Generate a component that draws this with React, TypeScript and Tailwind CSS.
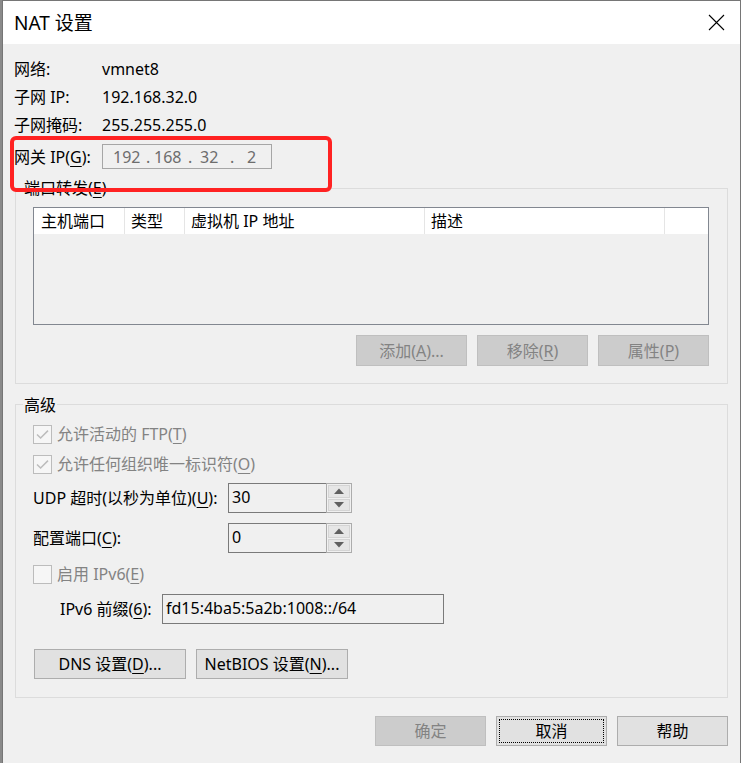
import React from "react";

const U = ({ c }: { c: string }) => (
  <span className="underline underline-offset-[3px] decoration-1">{c}</span>
);

function Btn({
  children,
  w = "w-[111px]",
  h = "h-[31px]",
  disabled = false,
  focused = false,
}: {
  children: React.ReactNode;
  w?: string;
  h?: string;
  disabled?: boolean;
  focused?: boolean;
}) {
  return (
    <div
      className={
        "relative flex items-center justify-center border leading-[20px] " +
        w +
        " " +
        h +
        " " +
        (disabled
          ? "bg-[#cccccc] border-[#bfbfbf] text-[#838383]"
          : "bg-[#e1e1e1] border-[#adadad] text-black")
      }
    >
      {children}
      {focused && (
        <span className="absolute inset-[2px] border border-dotted border-black" />
      )}
    </div>
  );
}

function Check({ checked }: { checked: boolean }) {
  return (
    <span className="w-[19px] h-[19px] border border-[#bcbcbc] bg-[#f6f6f6] flex items-center justify-center shrink-0">
      {checked && (
        <svg width="15" height="15" viewBox="0 0 15 15">
          <path
            d="M2 7.5 L5.6 11 L13 3.6"
            stroke="#bcbcbc"
            strokeWidth="1.5"
            fill="none"
          />
        </svg>
      )}
    </span>
  );
}

function Spin({ value }: { value: string }) {
  return (
    <div className="flex h-[30px]">
      <div className="w-[98px] h-full border-t border-l border-b border-[#7a7a7a] bg-[#f0f0f0] pl-[3px] pt-[3px] leading-[20px]">
        {value}
      </div>
      <div className="w-[26px] h-full border border-[#acacac] flex flex-col p-[1px] gap-[1px] bg-[#f0f0f0]">
        <div className="flex-1 border border-[#d4d4d4] bg-[#e6e6e6] flex items-center justify-center">
          <svg width="10" height="6" viewBox="0 0 10 6">
            <path d="M0 6 L5 0.5 L10 6 Z" fill="#606060" />
          </svg>
        </div>
        <div className="flex-1 border border-[#d4d4d4] bg-[#e6e6e6] flex items-center justify-center">
          <svg width="10" height="6" viewBox="0 0 10 6">
            <path d="M0 0 L10 0 L5 5.5 Z" fill="#606060" />
          </svg>
        </div>
      </div>
    </div>
  );
}

export default function App() {
  return (
    <div className="w-[741px] h-[763px] flex overflow-hidden bg-[#f0f0f0] text-[16px] text-black font-['Noto_Sans','Noto_Sans_CJK_SC',sans-serif]">
      <div className="w-[2px] h-full bg-[#8a8a8a] shrink-0" />
      <div className="relative w-[739px] h-[763px] border-t border-l border-r border-[#767676] bg-[#f0f0f0] shrink-0">
        {/* title bar */}
        <div className="h-[43px] bg-white flex items-center justify-between pl-[11px] pr-[15px]">
          <span className="text-[19px] leading-[24px]">NAT 设置</span>
          <svg width="17" height="17" viewBox="0 0 17 17">
            <path d="M1 1 L16 16 M16 1 L1 16" stroke="#000" strokeWidth="1.1" />
          </svg>
        </div>

        {/* info rows */}
        <div className="ml-[11px] pt-[11px] leading-[20px]">
          <div className="flex h-[28px] items-center">
            <span className="w-[88px]">网络:</span>
            <span>vmnet8</span>
          </div>
          <div className="flex h-[28px] items-center">
            <span className="w-[88px]">子网 IP:</span>
            <span>192.168.32.0</span>
          </div>
          <div className="flex h-[28px] items-center">
            <span className="w-[88px]">子网掩码:</span>
            <span>255.255.255.0</span>
          </div>
          <div className="flex mt-[5px] h-[25px] items-center">
            <span className="w-[88px]">
              网关 IP(<U c="G" />):
            </span>
            <div className="w-[170px] h-[25px] border border-[#a6a6a6] bg-[#f0f0f0] text-[#6d6d6d] flex items-center pl-[10px]">
              <span className="w-[33px]">192</span>
              <span className="w-[8px]">.</span>
              <span className="w-[34px]">168</span>
              <span className="w-[12px]">.</span>
              <span className="w-[30px]">32</span>
              <span className="w-[17px]">.</span>
              <span>2</span>
            </div>
          </div>
        </div>

        {/* port forwarding group */}
        <div className="relative mt-[19px] mx-[12px] border border-[#dcdcdc] pt-[18px] pl-[17px] pb-[17px] leading-[20px]">
          <span className="absolute left-[7px] top-[-11px] px-[1px] bg-[#f0f0f0]">
            端口转发(<U c="E" />)
          </span>
          <div className="w-[676px] h-[118px] border border-[#828790] bg-[#f0f0f0]">
            <div className="flex h-[26px] bg-white">
              <div className="w-[91px] border-r border-[#e5e5e5] pl-[7px] flex items-center">
                主机端口
              </div>
              <div className="w-[60px] border-r border-[#e5e5e5] pl-[6px] flex items-center">
                类型
              </div>
              <div className="w-[240px] border-r border-[#e5e5e5] pl-[6px] flex items-center">
                虚拟机 IP 地址
              </div>
              <div className="w-[240px] border-r border-[#e5e5e5] pl-[6px] flex items-center">
                描述
              </div>
              <div className="flex-1" />
            </div>
          </div>
          <div className="w-[676px] mt-[10px] flex justify-end gap-[10px]">
            <Btn disabled>
              添加(<U c="A" />)...
            </Btn>
            <Btn disabled>
              移除(<U c="R" />)
            </Btn>
            <Btn disabled>
              属性(<U c="P" />)
            </Btn>
          </div>
        </div>

        {/* advanced group */}
        <div className="relative mt-[20px] mx-[12px] border border-[#dcdcdc] pt-[19px] pl-[17px] pb-[18px] leading-[20px]">
          <span className="absolute left-[7px] top-[-10px] px-[1px] bg-[#f0f0f0]">
            高级
          </span>
          <div className="flex h-[20px] items-center gap-[5px] text-[#838383]">
            <Check checked />
            <span>
              允许活动的 FTP(<U c="T" />)
            </span>
          </div>
          <div className="flex mt-[10px] h-[20px] items-center gap-[5px] text-[#838383]">
            <Check checked />
            <span>
              允许任何组织唯一标识符(<U c="O" />)
            </span>
          </div>
          <div className="flex mt-[9px] h-[30px] items-center">
            <span className="w-[195px]">
              UDP 超时(以秒为单位)(<U c="U" />):
            </span>
            <Spin value="30" />
          </div>
          <div className="flex mt-[10px] h-[30px] items-center">
            <span className="w-[195px]">
              配置端口(<U c="C" />):
            </span>
            <Spin value="0" />
          </div>
          <div className="flex mt-[11px] h-[20px] items-center gap-[5px] text-[#838383]">
            <Check checked={false} />
            <span>
              启用 IPv6(<U c="E" />)
            </span>
          </div>
          <div className="flex mt-[10px] h-[30px] items-center pl-[27px]">
            <span className="w-[102px]">
              IPv6 前缀(<U c="6" />):
            </span>
            <div className="w-[282px] h-[30px] border border-[#7a7a7a] bg-[#f0f0f0] pl-[3px] pt-[3px] leading-[20px]">
              fd15:4ba5:5a2b:1008::/64
            </div>
          </div>
          <div className="flex mt-[25px] ml-[1px] gap-[10px]">
            <Btn w="w-[152px]" h="h-[30px]">
              DNS 设置(<U c="D" />)...
            </Btn>
            <Btn w="w-[152px]" h="h-[30px]">
              NetBIOS 设置(<U c="N" />)...
            </Btn>
          </div>
        </div>

        {/* bottom buttons */}
        <div className="mt-[18px] mr-[12px] flex justify-end gap-[10px] leading-[20px]">
          <Btn disabled h="h-[30px]">确定</Btn>
          <Btn focused h="h-[30px]">取消</Btn>
          <Btn h="h-[30px]">帮助</Btn>
        </div>

        {/* red annotation box */}
        <div className="absolute left-[7px] top-[135px] w-[322px] h-[56px] border-[4px] border-[#ff2222] rounded-[6px] pointer-events-none" />
      </div>
    </div>
  );
}
